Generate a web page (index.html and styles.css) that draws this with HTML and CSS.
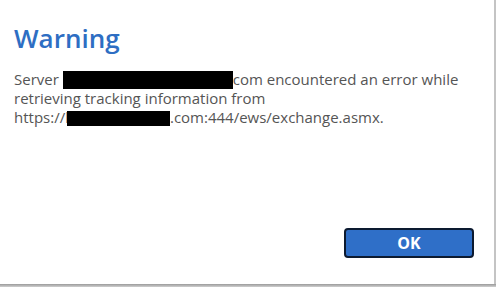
FILE: index.html
```html
<!DOCTYPE html>
<html>
<head>
<meta charset="utf-8">
<link rel="stylesheet" href="styles.css">
</head>
<body>
<div class="screen">
  <div class="dialog">
    <h1 class="title">Warning</h1>
    <p class="message">Server <span class="redact redact-1"></span>com encountered an error while retrieving tracking information from <span class="url">https://l<span class="redact redact-2"></span>.com:444/ews/exchange.asmx.</span></p>
    <div class="actions">
      <button class="ok">OK</button>
    </div>
  </div>
  <div class="edge"></div>
</div>
</body>
</html>
```
FILE: styles.css
```css
html, body {
  margin: 0;
  padding: 0;
  background: #ffffff;
}
.screen {
  width: 502px;
  height: 290px;
  display: flex;
  flex-direction: column;
  overflow: hidden;
}
.dialog {
  width: 496px;
  height: 284px;
  box-sizing: border-box;
  padding: 22px 0 0 14px;
  border-right: 2px solid #c4c4c4;
  display: flex;
  flex-direction: column;
  font-family: "Open Sans", "Noto Sans", sans-serif;
}
.title {
  margin: 0;
  font-size: 26px;
  font-weight: 600;
  line-height: 33px;
  color: #2e6ec3;
}
.message {
  margin: 15px 0 0 0;
  width: 470px;
  font-size: 15px;
  line-height: 19px;
  color: #555555;
}
.url {
  white-space: nowrap;
}
.redact {
  display: inline-block;
  background: #000;
  vertical-align: -4px;
}
.redact-1 {
  width: 170px;
  height: 18px;
}
.redact-2 {
  width: 103px;
  height: 15px;
  margin-left: -2px;
  vertical-align: -3px;
}
.actions {
  margin-top: auto;
  display: flex;
  justify-content: flex-end;
  padding: 0 20px 26px 0;
}
.ok {
  width: 130px;
  height: 30px;
  box-sizing: border-box;
  background: #2f6fc8;
  border: 2px solid #0c1a30;
  border-radius: 4px;
  color: #ffffff;
  font-family: "Open Sans", "Noto Sans", sans-serif;
  font-weight: 700;
  font-size: 16px;
  padding: 0;
}
.edge {
  height: 3px;
  width: 496px;
  background: linear-gradient(#9a9a9a, #cfcfcf);
}
```
